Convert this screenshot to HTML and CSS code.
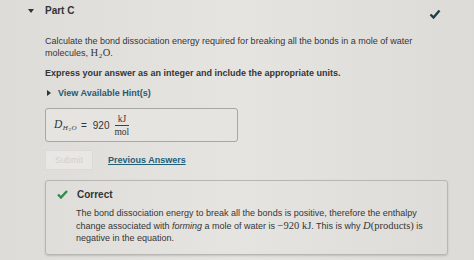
FILE: index.html
```html
<!DOCTYPE html>
<html>
<head>
<meta charset="utf-8">
<link rel="stylesheet" href="styles.css">
</head>
<body>
<div class="page">
  <div class="header">
    <span class="caret-down"></span>
    <span class="part">Part C</span>
    <svg class="done" width="12" height="10" viewBox="0 0 12 10"><path d="M1.5 5.5 L4.5 8.5 L10.5 1.5" fill="none" stroke="#1d3f48" stroke-width="2.4"/></svg>
  </div>
  <div class="content">
    <p class="q">Calculate the bond dissociation energy required for breaking all the bonds in a mole of water molecules, <span class="m">H<sub>2</sub>O</span>.</p>
    <p class="inst">Express your answer as an integer and include the appropriate units.</p>
    <div class="hint"><span class="caret-right"></span><span>View Available Hint(s)</span></div>
    <div class="answer">
      <span class="m var">D<sub><i>H</i><sub class="s2">2</sub><i>O</i></sub></span>
      <span class="eq">=</span>
      <span class="num">920</span>
      <span class="frac"><span class="top">kJ</span><span class="bot">mol</span></span>
    </div>
    <div class="actions">
      <span class="submit">Submit</span>
      <a class="prev">Previous Answers</a>
    </div>
    <div class="result">
      <div class="rhead">
        <svg width="11" height="9" viewBox="0 0 11 9"><path d="M1 4.5 L4 7.5 L10 1" fill="none" stroke="#2e8b4a" stroke-width="2.4"/></svg>
        <span>Correct</span>
      </div>
      <p class="rbody">The bond dissociation energy to break all the bonds is positive, therefore the enthalpy change associated with <i>forming</i> a mole of water is <span class="m">&minus;920 kJ</span>. This is why <span class="m"><i>D</i>(products)</span> is negative in the equation.</p>
    </div>
  </div>
</div>
</body>
</html>
```
FILE: styles.css
```css
html, body {
  margin: 0;
  padding: 0;
}
body {
  width: 474px;
  height: 260px;
  overflow: hidden;
  background: linear-gradient(90deg, #dedcd9 0%, #e6e4e1 50%, #dddbd8 100%);
  font-family: "Liberation Sans", Arial, sans-serif;
  color: #353535;
}
.page {
  padding: 0 0 0 28px;
}
.header {
  height: 21px;
  display: flex;
  align-items: center;
  position: relative;
}
.caret-down {
  width: 0;
  height: 0;
  border-left: 3.5px solid transparent;
  border-right: 3.5px solid transparent;
  border-top: 4px solid #333;
  margin-right: 11px;
}
.part {
  font-weight: bold;
  font-size: 10px;
  color: #333;
}
.done {
  position: absolute;
  left: 401px;
  top: 9px;
}
.content {
  padding: 14px 0 0 17px;
  width: 405px;
}
.q {
  margin: 0;
  font-size: 9px;
  line-height: 12px;
}
.m {
  font-family: "Liberation Serif", "Times New Roman", serif;
  font-size: 10.5px;
  line-height: 1;
}
.m sub {
  font-size: 7px;
  vertical-align: baseline;
  position: relative;
  top: 2px;
  line-height: 1;
  margin: 0 0.5px;
}
.inst {
  margin: 8px 0 0;
  font-size: 9px;
  font-weight: bold;
  line-height: 12px;
}
.hint {
  margin-top: 8px;
  display: flex;
  align-items: center;
  font-size: 9px;
  font-weight: bold;
  color: #2a5a70;
  height: 12px;
}
.caret-right {
  width: 0;
  height: 0;
  border-top: 3.5px solid transparent;
  border-bottom: 3.5px solid transparent;
  border-left: 4px solid #333;
  margin: 0 7px 0 2px;
}
.answer {
  margin-top: 9px;
  width: 193px;
  height: 34px;
  box-sizing: border-box;
  border: 1px solid #a9a7a4;
  border-radius: 3px;
  background: #e6e4e1;
  display: flex;
  align-items: center;
  padding-left: 8px;
}
.var {
  font-style: italic;
  font-size: 11.5px;
}
.var sub {
  font-size: 7px;
}
.var sub .s2 {
  font-style: normal;
  font-size: 5px;
  top: 1px;
}
.eq {
  font-size: 10px;
  margin: 0 6px 0 4px;
}
.num {
  font-size: 10px;
  margin-right: 5px;
}
.frac {
  display: inline-flex;
  flex-direction: column;
  align-items: center;
  font-family: "Liberation Serif", serif;
  font-size: 9.5px;
  line-height: 10px;
}
.frac .top {
  border-bottom: 1px solid #444;
  padding: 0 3px 1px;
}
.frac .bot {
  padding-top: 1px;
}
.actions {
  margin-top: 8px;
  display: flex;
  align-items: center;
  height: 20px;
}
.submit {
  width: 48px;
  height: 20px;
  box-sizing: border-box;
  border: 1px solid #dcdad7;
  background: #e9e7e4;
  color: #d2d0cd;
  font-size: 9px;
  display: flex;
  align-items: center;
  justify-content: center;
  margin-right: 15px;
}
.prev {
  font-size: 9px;
  font-weight: bold;
  color: #245f78;
  text-decoration: underline;
}
.result {
  margin-top: 10px;
  width: 403px;
  box-sizing: border-box;
  border: 1px solid #b8b6b3;
  border-radius: 3px;
  box-shadow: 0 1px 2px rgba(0,0,0,0.15);
  padding: 8px 10px 9px 11px;
}
.rhead {
  display: flex;
  align-items: center;
  font-size: 10px;
  font-weight: bold;
  color: #333;
}
.rhead svg {
  margin-right: 9px;
}
.rbody {
  margin: 7px 0 0 19px;
  font-size: 9px;
  line-height: 12.5px;
}
.rbody .m {
  font-size: 10.5px;
}
```
